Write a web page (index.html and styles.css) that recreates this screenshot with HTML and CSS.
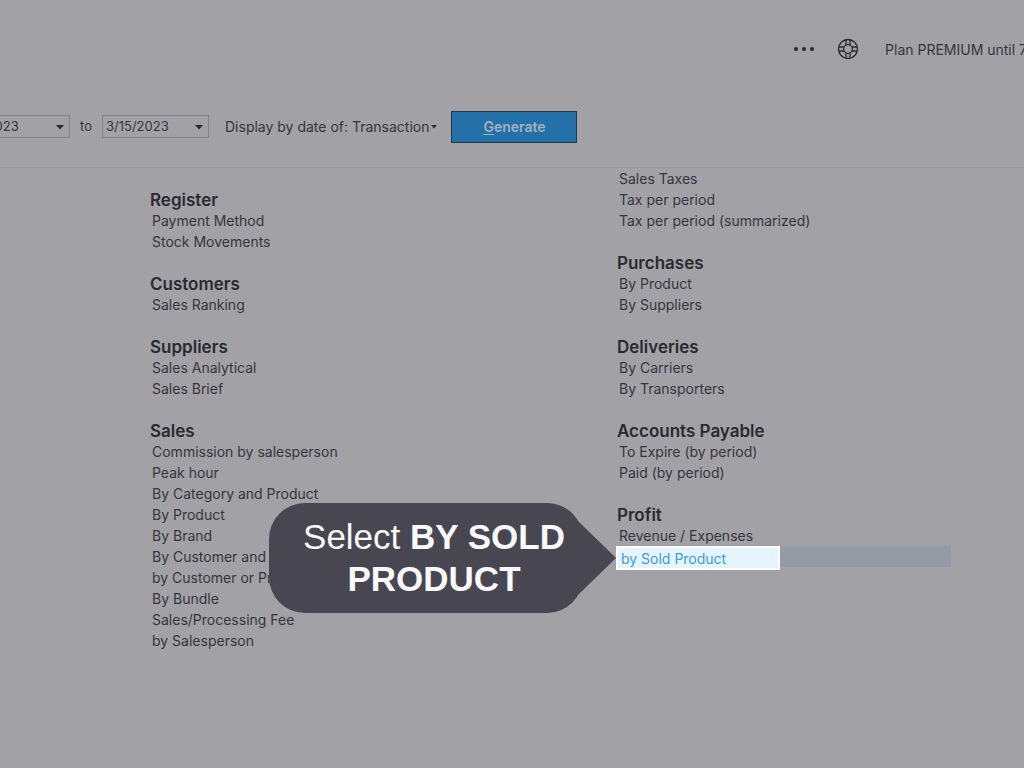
FILE: index.html
```html
<!DOCTYPE html>
<html lang="en">
<head>
<meta charset="utf-8">
<title>Reports</title>
<link rel="stylesheet" href="styles.css">
</head>
<body>
<header class="topbar">
  <button class="icon-button" type="button" aria-label="More options">
    <svg width="22" height="22" viewBox="0 0 22 22" fill="currentColor"><circle cx="3" cy="11" r="2.1"/><circle cx="11" cy="11" r="2.1"/><circle cx="19" cy="11" r="2.1"/></svg>
  </button>
  <button class="icon-button" type="button" aria-label="Help">
    <svg width="22" height="22" viewBox="0 0 22 22" fill="none" stroke="currentColor" stroke-width="1.3"><circle cx="11" cy="11" r="9.5"/><circle cx="11" cy="11" r="4.4"/><path d="M9 1.8V7.2M13 1.8V7.2M9 14.8V20.2M13 14.8V20.2M1.8 9H7.2M1.8 13H7.2M14.8 9H20.2M14.8 13H20.2"/></svg>
  </button>
  <span class="plan">Plan PREMIUM until 7</span>
</header>
<form class="filters">
  <span class="date-field">
    <select aria-label="Start date"><option>3/1/2023</option></select>
    <svg class="caret" width="8" height="5" viewBox="0 0 8 5"><path d="M0 0H8L4 4.5Z"/></svg>
  </span>
  <label class="to" for="end">to</label>
  <span class="date-field">
    <select id="end"><option>3/15/2023</option></select>
    <svg class="caret" width="8" height="5" viewBox="0 0 8 5"><path d="M0 0H8L4 4.5Z"/></svg>
  </span>
  <button class="display-by" type="button">Display by date of: Transaction
    <svg width="6" height="4" viewBox="0 0 6 4"><path d="M0 0H6L3 3.5Z"/></svg>
  </button>
  <button class="generate" type="button"><u>G</u>enerate</button>
</form>
<main class="reports">
  <div class="column column-left">
    <section><h2>Register</h2>
      <ul><li><a href="#">Payment Method</a></li><li><a href="#">Stock Movements</a></li></ul></section>
    <section><h2>Customers</h2>
      <ul><li><a href="#">Sales Ranking</a></li></ul></section>
    <section><h2>Suppliers</h2>
      <ul><li><a href="#">Sales Analytical</a></li><li><a href="#">Sales Brief</a></li></ul></section>
    <section><h2>Sales</h2>
      <ul>
        <li><a href="#">Commission by salesperson</a></li>
        <li><a href="#">Peak hour</a></li>
        <li><a href="#">By Category and Product</a></li>
        <li><a href="#">By Product</a></li>
        <li><a href="#">By Brand</a></li>
        <li><a href="#">By Customer and Category</a></li>
        <li><a href="#">by Customer or Product</a></li>
        <li><a href="#">By Bundle</a></li>
        <li><a href="#">Sales/Processing Fee</a></li>
        <li><a href="#">by Salesperson</a></li>
      </ul></section>
  </div>
  <div class="column">
    <section>
      <ul><li><a href="#">Sales Taxes</a></li><li><a href="#">Tax per period</a></li><li><a href="#">Tax per period (summarized)</a></li></ul></section>
    <section><h2>Purchases</h2>
      <ul><li><a href="#">By Product</a></li><li><a href="#">By Suppliers</a></li></ul></section>
    <section><h2>Deliveries</h2>
      <ul><li><a href="#">By Carriers</a></li><li><a href="#">By Transporters</a></li></ul></section>
    <section><h2>Accounts Payable</h2>
      <ul><li><a href="#">To Expire (by period)</a></li><li><a href="#">Paid (by period)</a></li></ul></section>
    <section><h2>Profit</h2>
      <ul>
        <li><a href="#">Revenue / Expenses</a></li>
        <li class="selected">
          <a class="spotlight" href="#">by Sold Product</a>
          <div class="callout" role="tooltip">Select <strong>BY SOLD PRODUCT</strong></div>
        </li>
      </ul></section>
  </div>
</main>
</body>
</html>
```
FILE: styles.css
```css
* { box-sizing: border-box; }
body {
  margin: 0;
  min-height: 100vh;
  overflow-x: hidden;
  background: #a2a1a6;
  color: #36363d;
  font: 14px/21px Inter, sans-serif;
}
button, select { font: inherit; color: inherit; }
.topbar {
  display: flex;
  align-items: center;
  justify-content: flex-end;
  height: 98px;
}
.icon-button {
  display: flex;
  margin-right: 22px;
  padding: 0;
  border: 0;
  background: none;
  color: #29292f;
}
.plan { margin: 0 -3px 0 4px; white-space: nowrap; }
.filters {
  display: flex;
  align-items: center;
  height: 70px;
  margin-left: -37px;
  padding-bottom: 12px;
  border-bottom: 1px solid #9c9ba1;
}
.date-field { position: relative; }
.date-field select {
  display: block;
  appearance: none;
  width: 107px;
  height: 23px;
  padding: 0 3px;
  border: 1px solid #838289;
  border-radius: 0;
  background: transparent;
  font-size: 13px;
}
.date-field:first-child select { padding-left: 0; }
.caret {
  position: absolute;
  top: 10px;
  right: 6px;
  fill: #29292f;
  pointer-events: none;
}
.to { width: 32px; font-size: 13px; text-align: center; }
.display-by {
  display: flex;
  align-items: center;
  gap: 2px;
  margin-left: 16px;
  padding: 0;
  border: 0;
  background: none;
  white-space: nowrap;
}
.display-by svg { fill: #29292f; }
.generate {
  width: 126px;
  height: 32px;
  margin-left: 14px;
  padding: 0;
  border: 1px solid #29323d;
  background: #2470a8;
  color: #a5b0bf;
  font-weight: 600;
}
.generate u { text-underline-offset: 2px; }
.reports {
  display: grid;
  grid-template-columns: 1fr 1fr;
  column-gap: 133px;
  padding: 0 73px 0 150px;
}
.column { display: flex; flex-direction: column; gap: 21px; }
.column-left { padding-top: 21px; }
h2 { margin: 0; font-size: 17px; line-height: 22px; height: 21px; font-weight: 600; color: #2a2a30; }
ul { margin: 0; padding: 0; list-style: none; }
li { height: 21px; padding-left: 2px; white-space: nowrap; }
a { color: inherit; text-decoration: none; }
.selected { position: relative; background: #949ba7; }
.spotlight {
  position: absolute;
  top: 0;
  left: -1px;
  width: 164px;
  height: 24px;
  padding-left: 3px;
  border: 2px solid #fff;
  background: #e6f4ff;
  color: #3b9ce6;
}
.callout {
  position: absolute;
  top: -43px;
  right: calc(100% + 34px);
  width: 314px;
  padding: 13px 12px 13px 28px;
  border-radius: 36px;
  background: #474651;
  color: #fafafa;
  font: 35px/42px "Liberation Sans", sans-serif;
  text-align: center;
  white-space: normal;
}
.callout::after {
  content: "";
  position: absolute;
  top: 18px;
  right: -33px;
  width: 38px;
  height: 74px;
  background: #474651;
  clip-path: polygon(0 0, 100% 50%, 0 100%);
}
```
